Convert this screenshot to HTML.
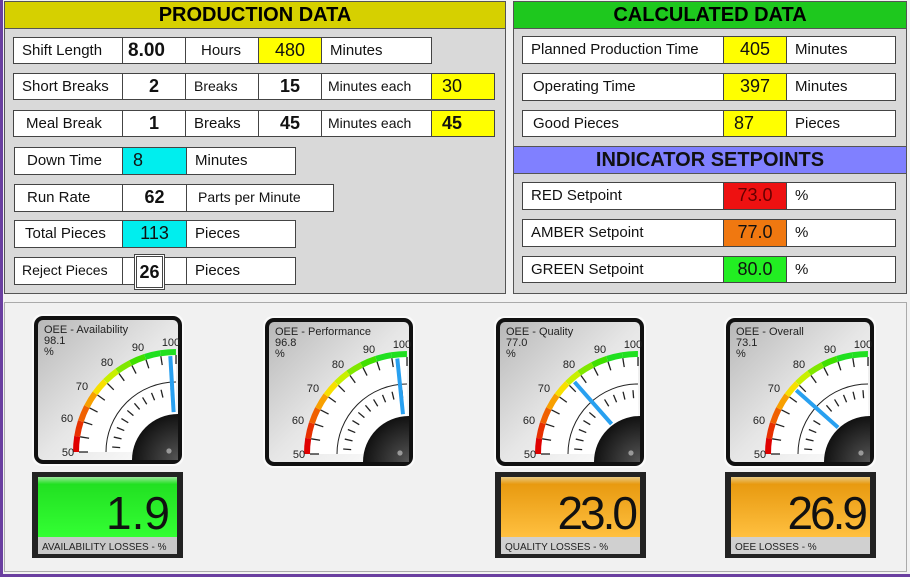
<!DOCTYPE html>
<html><head><meta charset="utf-8"><style>
*{margin:0;padding:0;box-sizing:border-box}
body{width:910px;height:577px;background:#f2f2f2;position:relative;overflow:hidden;font-family:"Liberation Sans",sans-serif}
.panel{position:absolute;background:#d9d9d9;border:1px solid #555}
.hdr{position:absolute;font-weight:bold;font-size:20px;text-align:center;line-height:26px;border-bottom:1px solid #555}
.c{position:absolute;background:#fff;border:1px solid #444;font-size:15px;line-height:25px;padding-left:8px;white-space:nowrap;color:#111}
.y{background:#ffff00}.cy{background:#00eeee}
.b{font-size:18px;font-weight:bold;padding-left:0;text-align:center}
svg text{font-family:"Liberation Sans",sans-serif}
</style></head><body>
<div style="position:absolute;left:0;top:0;width:3px;height:577px;background:#6a3fa0"></div>
<div style="position:absolute;left:0;top:574px;width:910px;height:3px;background:#6a3fa0"></div>

<div class="panel" style="left:4px;top:1px;width:502px;height:293px"></div>
<div class="hdr" style="left:5px;top:2px;width:500px;background:#d6d000">PRODUCTION DATA</div>

<div class="c" style="left:13px;top:37px;width:110px;height:27px">Shift Length</div>
<div class="c b" style="left:122px;top:37px;width:64px;height:27px;text-align:left;padding-left:5px;font-size:19px">8.00</div>
<div class="c" style="left:185px;top:37px;width:74px;height:27px;padding-left:15px">Hours</div>
<div class="c b y" style="left:258px;top:37px;width:64px;height:27px;font-weight:normal">480</div>
<div class="c" style="left:321px;top:37px;width:111px;height:27px">Minutes</div>

<div class="c" style="left:13px;top:73px;width:110px;height:27px">Short Breaks</div>
<div class="c b" style="left:122px;top:73px;width:64px;height:27px">2</div>
<div class="c" style="left:185px;top:73px;width:74px;height:27px;font-size:14px">Breaks</div>
<div class="c b" style="left:258px;top:73px;width:64px;height:27px">15</div>
<div class="c" style="left:321px;top:73px;width:111px;height:27px;font-size:14px;padding-left:6px">Minutes each</div>
<div class="c b y" style="left:431px;top:73px;width:64px;height:27px;text-align:left;padding-left:10px;font-weight:normal">30</div>

<div class="c" style="left:13px;top:110px;width:110px;height:27px;padding-left:12px">Meal Break</div>
<div class="c b" style="left:122px;top:110px;width:64px;height:27px">1</div>
<div class="c" style="left:185px;top:110px;width:74px;height:27px">Breaks</div>
<div class="c b" style="left:258px;top:110px;width:64px;height:27px">45</div>
<div class="c" style="left:321px;top:110px;width:111px;height:27px;font-size:14px;padding-left:6px">Minutes each</div>
<div class="c b y" style="left:431px;top:110px;width:64px;height:27px;text-align:left;padding-left:10px">45</div>

<div class="c" style="left:14px;top:147px;width:109px;height:28px;padding-left:12px">Down Time</div>
<div class="c b cy" style="left:122px;top:147px;width:65px;height:28px;text-align:left;padding-left:10px;font-weight:normal">8</div>
<div class="c" style="left:186px;top:147px;width:110px;height:28px">Minutes</div>

<div class="c" style="left:14px;top:184px;width:109px;height:28px;padding-left:12px">Run Rate</div>
<div class="c b" style="left:122px;top:184px;width:65px;height:28px">62</div>
<div class="c" style="left:186px;top:184px;width:148px;height:28px;font-size:14px;padding-left:11px">Parts per Minute</div>

<div class="c" style="left:14px;top:220px;width:109px;height:28px;padding-left:10px">Total Pieces</div>
<div class="c b cy" style="left:122px;top:220px;width:65px;height:28px;font-weight:normal">113</div>
<div class="c" style="left:186px;top:220px;width:110px;height:28px">Pieces</div>

<div class="c" style="left:14px;top:257px;width:109px;height:28px;font-size:14px;padding-left:7px">Reject Pieces</div>
<div class="c" style="left:122px;top:257px;width:65px;height:28px"></div>
<div class="c b" style="left:134px;top:254px;width:31px;height:36px;border:3px double #444;line-height:30px">26</div>
<div class="c" style="left:186px;top:257px;width:110px;height:28px">Pieces</div>

<div class="panel" style="left:513px;top:1px;width:394px;height:293px"></div>
<div class="hdr" style="left:514px;top:2px;width:392px;background:#1ec81e">CALCULATED DATA</div>
<div class="c" style="left:522px;top:36px;width:202px;height:28px">Planned Production Time</div>
<div class="c b y" style="left:723px;top:36px;width:64px;height:28px;font-weight:normal">405</div>
<div class="c" style="left:786px;top:36px;width:110px;height:28px">Minutes</div>
<div class="c" style="left:522px;top:73px;width:202px;height:28px;padding-left:10px">Operating Time</div>
<div class="c b y" style="left:723px;top:73px;width:64px;height:28px;font-weight:normal">397</div>
<div class="c" style="left:786px;top:73px;width:110px;height:28px">Minutes</div>
<div class="c" style="left:522px;top:110px;width:202px;height:27px;padding-left:10px">Good Pieces</div>
<div class="c b y" style="left:723px;top:110px;width:64px;height:27px;text-align:left;padding-left:10px;font-weight:normal">87</div>
<div class="c" style="left:786px;top:110px;width:110px;height:27px">Pieces</div>

<div class="hdr" style="left:514px;top:146px;width:392px;background:#8080ff;border-top:1px solid #555;color:#111">INDICATOR SETPOINTS</div>
<div class="c" style="left:522px;top:182px;width:202px;height:28px">RED Setpoint</div>
<div class="c b" style="left:723px;top:182px;width:64px;height:28px;background:#ee1111;font-weight:normal;color:#600">73.0</div>
<div class="c" style="left:786px;top:182px;width:110px;height:28px">%</div>
<div class="c" style="left:522px;top:219px;width:202px;height:28px">AMBER Setpoint</div>
<div class="c b" style="left:723px;top:219px;width:64px;height:28px;background:#f07810;font-weight:normal">77.0</div>
<div class="c" style="left:786px;top:219px;width:110px;height:28px">%</div>
<div class="c" style="left:522px;top:256px;width:202px;height:27px">GREEN Setpoint</div>
<div class="c b" style="left:723px;top:256px;width:64px;height:27px;background:#22ee22;font-weight:normal">80.0</div>
<div class="c" style="left:786px;top:256px;width:110px;height:27px">%</div>

<div style="position:absolute;left:4px;top:302px;width:903px;height:270px;border:1px solid #aaa;background:#f1f1f1"></div>

<svg width="910" height="577" style="position:absolute;left:0;top:0">
<defs>
<linearGradient id="face" x1="0" y1="0" x2="1" y2="1"><stop offset="0" stop-color="#b8b8b8"/><stop offset="0.5" stop-color="#e6e6e6"/><stop offset="1" stop-color="#ffffff"/></linearGradient>
<radialGradient id="hub" cx="1" cy="1" r="1"><stop offset="0" stop-color="#555"/><stop offset="1" stop-color="#111"/></radialGradient>
<linearGradient id="lg" x1="0" y1="0" x2="0" y2="1"><stop offset="0" stop-color="#9be89b"/><stop offset="0.12" stop-color="#22e022"/><stop offset="1" stop-color="#33ff33"/></linearGradient>
<linearGradient id="lo" x1="0" y1="0" x2="0" y2="1"><stop offset="0" stop-color="#e8c880"/><stop offset="0.12" stop-color="#e89a10"/><stop offset="1" stop-color="#ffc040"/></linearGradient>
<g id="dial">
<rect x="0" y="0" width="152" height="152" rx="10" fill="#fafafa"/>
<rect x="2" y="2" width="148" height="148" rx="9" fill="#111"/>
<rect x="6" y="6" width="140" height="140" rx="5" fill="url(#face)"/>
<path d="M44 138 A100 100 0 0 1 144 38 L144 138Z" fill="#fff"/>
<path d="M74 138 A70 70 0 0 1 144 68" fill="none" stroke="#222" stroke-width="1"/>
<g stroke-width="6" fill="none">
<path d="M44 138 A100 100 0 0 1 45.2 122.4" stroke="#e00000"/>
<path d="M44 138 A100 100 0 0 1 45.2 122.4" stroke="#e83000" transform="rotate(9 144 138)"/>
<path d="M44 138 A100 100 0 0 1 45.2 122.4" stroke="#f06000" transform="rotate(18 144 138)"/>
<path d="M44 138 A100 100 0 0 1 45.2 122.4" stroke="#f8a000" transform="rotate(27 144 138)"/>
<path d="M44 138 A100 100 0 0 1 45.2 122.4" stroke="#f8e000" transform="rotate(36 144 138)"/>
<path d="M44 138 A100 100 0 0 1 45.2 122.4" stroke="#c8f000" transform="rotate(45 144 138)"/>
<path d="M44 138 A100 100 0 0 1 45.2 122.4" stroke="#80e800" transform="rotate(54 144 138)"/>
<path d="M44 138 A100 100 0 0 1 45.2 122.4" stroke="#40e000" transform="rotate(63 144 138)"/>
<path d="M44 138 A100 100 0 0 1 45.2 122.4" stroke="#20e020" transform="rotate(72 144 138)"/>
<path d="M44 138 A100 100 0 0 1 45.2 122.4" stroke="#20e020" transform="rotate(81 144 138)"/>
</g>
<g stroke="#222" stroke-width="1.3">
<line x1="47" y1="138" x2="56" y2="138"/><line x1="47" y1="138" x2="56" y2="138" transform="rotate(9 144 138)"/><line x1="47" y1="138" x2="56" y2="138" transform="rotate(18 144 138)"/><line x1="47" y1="138" x2="56" y2="138" transform="rotate(27 144 138)"/><line x1="47" y1="138" x2="56" y2="138" transform="rotate(36 144 138)"/><line x1="47" y1="138" x2="56" y2="138" transform="rotate(45 144 138)"/><line x1="47" y1="138" x2="56" y2="138" transform="rotate(54 144 138)"/><line x1="47" y1="138" x2="56" y2="138" transform="rotate(63 144 138)"/><line x1="47" y1="138" x2="56" y2="138" transform="rotate(72 144 138)"/><line x1="47" y1="138" x2="56" y2="138" transform="rotate(81 144 138)"/><line x1="47" y1="138" x2="56" y2="138" transform="rotate(90 144 138)"/>
<line x1="80" y1="138" x2="88" y2="138" transform="rotate(4.5 144 138)"/><line x1="80" y1="138" x2="88" y2="138" transform="rotate(13.5 144 138)"/><line x1="80" y1="138" x2="88" y2="138" transform="rotate(22.5 144 138)"/><line x1="80" y1="138" x2="88" y2="138" transform="rotate(31.5 144 138)"/><line x1="80" y1="138" x2="88" y2="138" transform="rotate(40.5 144 138)"/><line x1="80" y1="138" x2="88" y2="138" transform="rotate(49.5 144 138)"/><line x1="80" y1="138" x2="88" y2="138" transform="rotate(58.5 144 138)"/><line x1="80" y1="138" x2="88" y2="138" transform="rotate(67.5 144 138)"/><line x1="80" y1="138" x2="88" y2="138" transform="rotate(76.5 144 138)"/><line x1="80" y1="138" x2="88" y2="138" transform="rotate(85.5 144 138)"/>
</g>
</g>
<g id="hubg">
<path d="M100 146 A46 46 0 0 1 146 100 L146 146Z" fill="url(#hub)"/>
<circle cx="137" cy="137" r="3" fill="#999" stroke="#444" stroke-width="0.8"/>
</g>
</defs>

<g transform="translate(32,314)">
<use href="#dial"/>
<line x1="48" y1="138" x2="104" y2="138" stroke="#28a0f0" stroke-width="4" transform="rotate(86.6 144 138)"/>
<use href="#hubg"/>
<g font-size="11" fill="#222"><text x="12" y="19">OEE - Availability</text><text x="12" y="30">98.1</text><text x="12" y="41">%</text>
<text x="36" y="142" text-anchor="middle">50</text><text x="35" y="108" text-anchor="middle">60</text><text x="50" y="76" text-anchor="middle">70</text><text x="75" y="52" text-anchor="middle">80</text><text x="106" y="37" text-anchor="middle">90</text><text x="139" y="32" text-anchor="middle">100</text></g>
</g>
<g transform="translate(263,316)">
<use href="#dial"/>
<line x1="48" y1="138" x2="104" y2="138" stroke="#28a0f0" stroke-width="4" transform="rotate(84.2 144 138)"/>
<use href="#hubg"/>
<g font-size="11" fill="#222"><text x="12" y="19">OEE - Performance</text><text x="12" y="30">96.8</text><text x="12" y="41">%</text>
<text x="36" y="142" text-anchor="middle">50</text><text x="35" y="108" text-anchor="middle">60</text><text x="50" y="76" text-anchor="middle">70</text><text x="75" y="52" text-anchor="middle">80</text><text x="106" y="37" text-anchor="middle">90</text><text x="139" y="32" text-anchor="middle">100</text></g>
</g>
<g transform="translate(494,316)">
<use href="#dial"/>
<line x1="48" y1="138" x2="104" y2="138" stroke="#28a0f0" stroke-width="4" transform="rotate(48.6 144 138)"/>
<use href="#hubg"/>
<g font-size="11" fill="#222"><text x="12" y="19">OEE - Quality</text><text x="12" y="30">77.0</text><text x="12" y="41">%</text>
<text x="36" y="142" text-anchor="middle">50</text><text x="35" y="108" text-anchor="middle">60</text><text x="50" y="76" text-anchor="middle">70</text><text x="75" y="52" text-anchor="middle">80</text><text x="106" y="37" text-anchor="middle">90</text><text x="139" y="32" text-anchor="middle">100</text></g>
</g>
<g transform="translate(724,316)">
<use href="#dial"/>
<line x1="48" y1="138" x2="104" y2="138" stroke="#28a0f0" stroke-width="4" transform="rotate(41.6 144 138)"/>
<use href="#hubg"/>
<g font-size="11" fill="#222"><text x="12" y="19">OEE - Overall</text><text x="12" y="30">73.1</text><text x="12" y="41">%</text>
<text x="36" y="142" text-anchor="middle">50</text><text x="35" y="108" text-anchor="middle">60</text><text x="50" y="76" text-anchor="middle">70</text><text x="75" y="52" text-anchor="middle">80</text><text x="106" y="37" text-anchor="middle">90</text><text x="139" y="32" text-anchor="middle">100</text></g>
</g>

<g transform="translate(32,472)">
<rect x="0" y="0" width="151" height="86" fill="#222"/><rect x="6" y="5" width="139" height="60" fill="url(#lg)"/><rect x="6" y="65" width="139" height="17" fill="#c8c8c8"/>
<text x="138" y="57" text-anchor="end" font-family="DejaVu Sans Mono" font-size="46" fill="#111">1.9</text>
<text x="10" y="78" font-size="10" fill="#222">AVAILABILITY LOSSES - %</text>
</g>
<g transform="translate(495,472)">
<rect x="0" y="0" width="151" height="86" fill="#222"/><rect x="6" y="5" width="139" height="60" fill="url(#lo)"/><rect x="6" y="65" width="139" height="17" fill="#d0d0d0"/>
<text x="140" y="57" text-anchor="end" font-family="DejaVu Sans Mono" font-size="46" fill="#111" letter-spacing="-3">23.0</text>
<text x="10" y="78" font-size="10" fill="#222">QUALITY LOSSES - %</text>
</g>
<g transform="translate(725,472)">
<rect x="0" y="0" width="151" height="86" fill="#222"/><rect x="6" y="5" width="139" height="60" fill="url(#lo)"/><rect x="6" y="65" width="139" height="17" fill="#d0d0d0"/>
<text x="140" y="57" text-anchor="end" font-family="DejaVu Sans Mono" font-size="46" fill="#111" letter-spacing="-3">26.9</text>
<text x="10" y="78" font-size="10" fill="#222">OEE LOSSES - %</text>
</g>
</svg>
</body></html>
